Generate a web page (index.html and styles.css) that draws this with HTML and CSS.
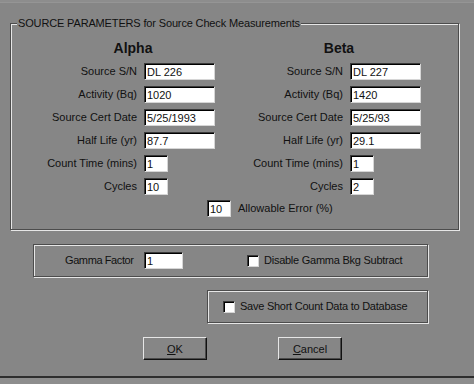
FILE: index.html
```html
<!DOCTYPE html>
<html lang="en">
<head>
  <meta charset="UTF-8" />
  <title>Source Parameters</title>
  <link rel="stylesheet" href="styles.css">
</head>
<body>

  <div class="window">
    <div class="group">
      <div class="legend">SOURCE PARAMETERS for Source Check Measurements</div>

      <div class="cols">
        <div class="col">
          <h2>Alpha</h2>
          <div class="rows">
            <label>Source S/N</label><input class="long" type="text" value="DL 226">
            <label>Activity (Bq)</label><input class="long" type="text" value="1020">
            <label>Source Cert Date</label><input class="long" type="text" value="5/25/1993">
            <label>Half Life (yr)</label><input class="long" type="text" value="87.7">
            <label>Count Time (mins)</label><input class="short" type="text" value="1">
            <label>Cycles</label><input class="short" type="text" value="10">
          </div>
        </div>

        <div class="col">
          <h2>Beta</h2>
          <div class="rows">
            <label>Source S/N</label><input class="long" type="text" value="DL 227">
            <label>Activity (Bq)</label><input class="long" type="text" value="1420">
            <label>Source Cert Date</label><input class="long" type="text" value="5/25/93">
            <label>Half Life (yr)</label><input class="long" type="text" value="29.1">
            <label>Count Time (mins)</label><input class="short" type="text" value="1">
            <label>Cycles</label><input class="short" type="text" value="2">
          </div>
        </div>
      </div>

      <div class="error-row">
        <input class="short" type="text" value="10">
        <label>Allowable Error (%)</label>
      </div>
    </div>

    <div class="box gamma">
      <label class="gamma-label">Gamma Factor</label>
      <input class="gamma-input" type="text" value="1">
      <label class="check disable">
        <input type="checkbox"> Disable Gamma Bkg Subtract
      </label>
    </div>

    <div class="box save">
      <label class="check">
        <input type="checkbox"> Save Short Count Data to Database
      </label>
    </div>

    <div class="buttons">
      <button><u>O</u>K</button>
      <button><u>C</u>ancel</button>
    </div>
  </div>

</body>
</html>
```

FILE: styles.css
```css
html {
  background: #8d8d8d;
}
body {
  margin: 0;
  font-family: 'Liberation Sans', Arial, sans-serif;
  font-size: 11px;
  line-height: 13px;
  color: #111;
}
.window {
  margin-top: 2px;
  height: 373px;
  background: #868686;
  border-top: 1px solid #959595;
  border-bottom: 2px solid #2e2e2e;
  overflow: hidden;
}

/* etched frames */
.group,
.box {
  border: 1px solid #4c4c4c;
  box-shadow: 1px 1px 0 #e6e6e6, inset 1px 1px 0 #e6e6e6;
  box-sizing: border-box;
}
.group {
  margin: 20px 0 0 10px;
  width: 449px;
  padding-bottom: 12px;
}
.legend {
  width: fit-content;
  margin: -7px 0 0 6px;
  padding: 0 1px;
  background: #868686;
  letter-spacing: -0.15px;
}
.cols {
  display: flex;
  padding-left: 1px;
}
.col {
  width: 206px;
}
h2 {
  margin: 10px 0 7px;
  padding-left: 36px;
  text-align: center;
  font-size: 14px;
  line-height: 16px;
  font-weight: bold;
}
.rows {
  display: grid;
  grid-template-columns: 125px 74px;
  column-gap: 7px;
  row-gap: 6px;
  align-items: center;
}
.rows label {
  text-align: right;
}

input[type="text"] {
  height: 17px;
  box-sizing: border-box;
  margin: 0;
  padding: 0 2px;
  font-family: inherit;
  font-size: 11px;
  line-height: 13px;
  color: #111;
  background: #fff;
  border: 1px solid;
  border-color: #3a3a3a #d6d6d6 #d6d6d6 #3a3a3a;
  box-shadow: inset 1px 1px 0 #000;
  outline: none;
}
input.long {
  width: 71px;
}
input.short {
  width: 24px;
}

.error-row {
  display: flex;
  align-items: center;
  gap: 7px;
  margin: 5px 0 0 196px;
}

.gamma {
  margin: 14px 0 0 33px;
  width: 395px;
  height: 33px;
  display: flex;
  align-items: center;
  padding-left: 31px;
}
.gamma-label {
  width: 68px;
  margin-right: 11px;
  letter-spacing: -0.4px;
  white-space: nowrap;
}
.gamma-input.gamma-input {
  width: 39px;
}
.disable {
  margin-left: 64px;
}

.check {
  display: flex;
  align-items: center;
  gap: 5px;
  letter-spacing: -0.25px;
}
input[type="checkbox"] {
  appearance: none;
  margin: 0;
  width: 12px;
  height: 12px;
  box-sizing: border-box;
  background: #fff;
  border: 1px solid;
  border-color: #3a3a3a #d6d6d6 #d6d6d6 #3a3a3a;
  box-shadow: inset 1px 1px 0 #000;
}

.save {
  margin: 13px 0 0 207px;
  width: 221px;
  height: 33px;
  display: flex;
  align-items: center;
  padding-left: 15px;
}

.buttons {
  display: flex;
  gap: 71px;
  margin: 14px 0 0 143px;
}
button {
  width: 64px;
  height: 23px;
  padding: 0;
  font-family: inherit;
  font-size: 11px;
  color: #111;
  background: #868686;
  border: 1px solid;
  border-color: #e6e6e6 #111 #111 #e6e6e6;
  box-shadow: inset -1px -1px 0 #4a4a4a;
}
```
